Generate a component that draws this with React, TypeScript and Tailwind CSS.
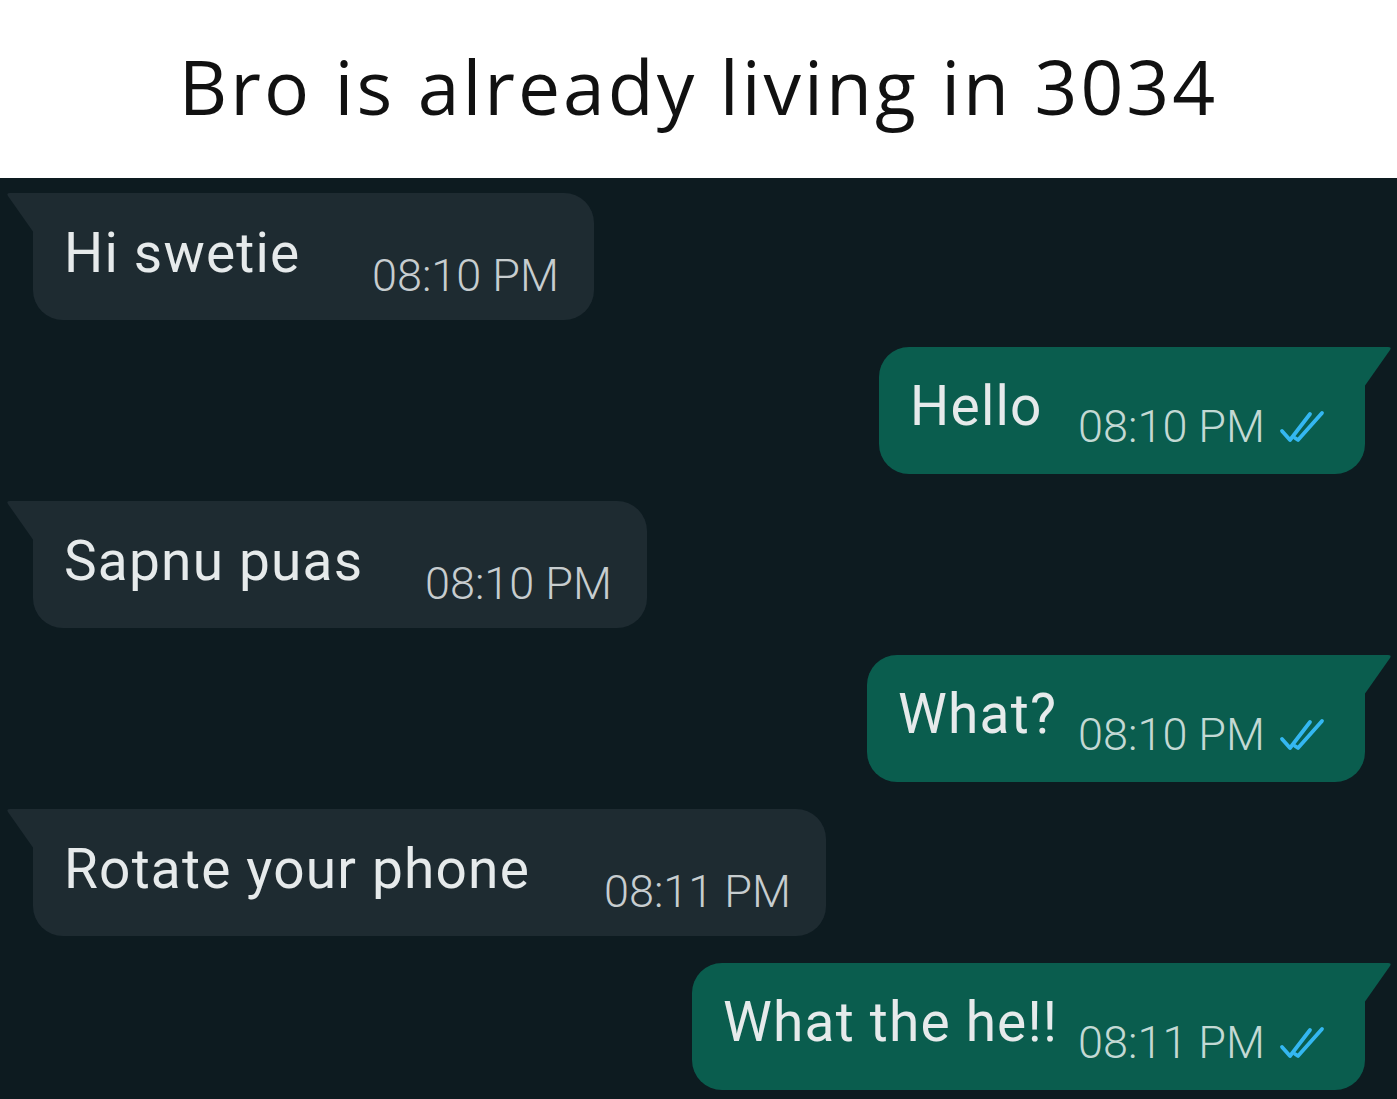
import React from 'react';

type Msg = {
  text: string;
  time: string;
  out: boolean;
  textWidth: string;
};

const messages: Msg[] = [
  { text: 'Hi swetie', time: '08:10 PM', out: false, textWidth: 'w-[308px]' },
  { text: 'Hello', time: '08:10 PM', out: true, textWidth: 'w-[168px]' },
  { text: 'Sapnu puas', time: '08:10 PM', out: false, textWidth: 'w-[361px]' },
  { text: 'What?', time: '08:10 PM', out: true, textWidth: 'w-[180px]' },
  { text: 'Rotate your phone', time: '08:11 PM', out: false, textWidth: 'w-[540px]' },
  { text: 'What the he!!', time: '08:11 PM', out: true, textWidth: 'w-[355px]' },
];

const DoubleCheck: React.FC = () => (
  <svg width="46" height="34" viewBox="0 0 46 34" fill="none" className="ml-[14px] mb-[5px]">
    <path d="M3 21 L11 30 L31 4" stroke="#34b7f1" strokeWidth="3.8" strokeLinecap="round" strokeLinejoin="round" />
    <path d="M16 28 L19 30 L43 3" stroke="#34b7f1" strokeWidth="3.8" strokeLinecap="round" strokeLinejoin="round" />
  </svg>
);

const Bubble: React.FC<{ msg: Msg }> = ({ msg }) => {
  const bg = msg.out ? 'bg-[#0a5d4e]' : 'bg-[#1e2b31]';
  const fill = msg.out ? '#0a5d4e' : '#1e2b31';
  return (
    <div className={msg.out ? 'flex justify-end pr-[32px]' : 'flex justify-start pl-[33px]'}>
      <div
        className={`relative h-[127px] ${bg} ${msg.out ? 'rounded-[30px] rounded-tr-none pl-[31px] pr-[40px]' : 'rounded-[30px] rounded-tl-none pl-[31px] pr-[35px]'} flex items-start`}
      >
        {msg.out ? (
          <svg width="28" height="40" viewBox="0 0 28 40" className="absolute -right-[27px] top-0">
            <path d="M0 0 L24 0 Q28 0 26 3 L0 40 Z" fill={fill} />
          </svg>
        ) : (
          <svg width="28" height="40" viewBox="0 0 28 40" className="absolute -left-[27px] top-0">
            <path d="M28 0 L4 0 Q0 0 2 3 L28 40 Z" fill={fill} />
          </svg>
        )}
        <span
          className={`${msg.textWidth} ${msg.out ? 'mt-[32px]' : 'mt-[33px]'} text-[55px] leading-[55px] tracking-[1.2px] text-[#e6eaeb] whitespace-nowrap`}
          style={{ fontFamily: 'Roboto, "Liberation Sans", sans-serif' }}
        >
          {msg.text}
        </span>
        <span className={`flex items-end whitespace-nowrap ${msg.out ? 'mt-[57px]' : 'mt-[60px]'}`}>
          <span
            className={`text-[45px] leading-[45px] font-light ${msg.out ? 'text-[#c3d9d4]' : 'text-[#c7cdcf]'}`}
            style={{ fontFamily: 'Roboto, "Liberation Sans", sans-serif' }}
          >
            {msg.time}
          </span>
          {msg.out && <DoubleCheck />}
        </span>
      </div>
    </div>
  );
};

const App: React.FC = () => {
  return (
    <div className="w-[1397px] h-[1099px] overflow-hidden flex flex-col bg-white">
      {/* Caption */}
      <div className="h-[178px] flex items-center justify-center">
        <h1
          className="text-[75px] leading-none font-medium text-[#111111] tracking-[3px] -mt-[6px]"
          style={{ fontFamily: '"Open Sans", "Noto Sans", sans-serif' }}
        >
          Bro is already living in 3034
        </h1>
      </div>

      {/* Chat */}
      <div className="flex-1 bg-[#0d1b20] flex flex-col gap-[27px] pt-[15px]">
        {messages.map((m, i) => (
          <Bubble key={i} msg={m} />
        ))}
      </div>
    </div>
  );
};

export default App;
